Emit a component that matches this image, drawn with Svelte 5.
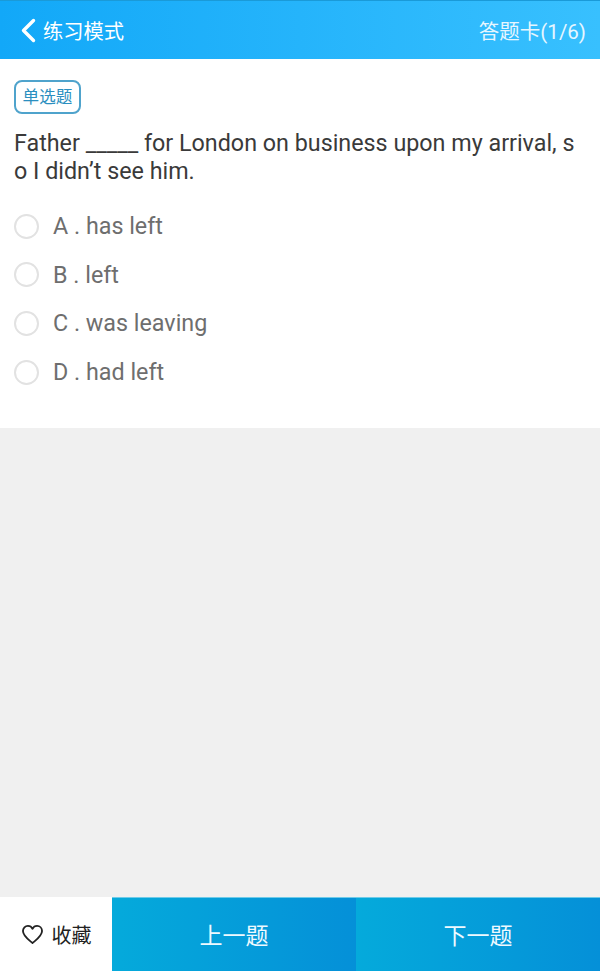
<script>
  const options = [
    { key: 'A', text: 'has left' },
    { key: 'B', text: 'left' },
    { key: 'C', text: 'was leaving' },
    { key: 'D', text: 'had left' }
  ];
</script>

<div class="page">
  <header class="topbar">
    <div class="back">
      <svg class="chevron" width="15" height="25" viewBox="0 0 15 25">
        <path d="M12.5 2.5 L2.5 12.5 L12.5 22.5" fill="none" stroke="#fff" stroke-width="3.4" stroke-linecap="round" stroke-linejoin="round" />
      </svg>
      <span>练习模式</span>
    </div>
    <div class="card-link">答题卡(1/6)</div>
  </header>

  <section class="question">
    <span class="tag">单选题</span>
    <p class="stem">Father _____ for London on business upon my arrival, so I didn’t see him.</p>
    <ul class="options">
      {#each options as opt}
        <li class="option">
          <span class="radio"></span>
          <span>{opt.key} . {opt.text}</span>
        </li>
      {/each}
    </ul>
  </section>

  <div class="spacer"></div>

  <footer class="bottombar">
    <div class="fav">
      <svg width="23" height="21" viewBox="0 0 24 22">
        <path d="M12 20 C8 16.6 2 12.6 2 7.4 C2 4.2 4.4 2 7.2 2 C9.2 2 11 3 12 5 C13 3 14.8 2 16.8 2 C19.6 2 22 4.2 22 7.4 C22 12.6 16 16.6 12 20 Z" fill="none" stroke="#222" stroke-width="1.9" stroke-linejoin="round" />
      </svg>
      <span>收藏</span>
    </div>
    <div class="nav-btn">上一题</div>
    <div class="nav-btn">下一题</div>
  </footer>
</div>

<style>
  :global(body) {
    margin: 0;
  }

  .page {
    display: flex;
    flex-direction: column;
    height: 971px;
    background: #f0f0f0;
    font-family: Roboto, "Noto Sans CJK SC", sans-serif;
  }

  .topbar {
    display: flex;
    justify-content: space-between;
    align-items: center;
    height: 58px;
    padding: 0 14px 2px 21px;
    margin-bottom: -2px;
    border-top: 1px solid #1a9ad8;
    background: linear-gradient(90deg, #12a8f8, #38c0fe);
    color: #fff;
    font-size: 20.3px;
  }

  .back {
    display: flex;
    align-items: center;
    gap: 7px;
  }

  .card-link {
    color: #e6f6ff;
    font-size: 20.5px;
  }

  .question {
    height: 369px;
    padding: 21px 14px 0;
    box-sizing: border-box;
    background: #fff;
  }

  .tag {
    display: block;
    box-sizing: border-box;
    width: 67px;
    height: 34px;
    border: 2px solid #4fa3cc;
    border-radius: 8px;
    color: #2b8fc0;
    font-size: 16.6px;
    line-height: 32px;
    text-align: center;
  }

  .stem {
    margin: 15px 0 0;
    padding-right: 8px;
    color: #3a3a3a;
    font-size: 23.3px;
    line-height: 28px;
    word-break: break-all;
  }

  .options {
    list-style: none;
    margin: 17px 0 0;
    padding: 0;
  }

  .option {
    display: flex;
    align-items: center;
    gap: 14px;
    height: 48.6px;
    color: #6e6e6e;
    font-size: 23.3px;
  }

  .radio {
    width: 25px;
    height: 25px;
    box-sizing: border-box;
    border: 2px solid #e2e2e2;
    border-radius: 50%;
  }

  .spacer {
    flex: 1;
  }

  .bottombar {
    display: flex;
    height: 74px;
  }

  .fav {
    display: flex;
    align-items: center;
    justify-content: center;
    gap: 8px;
    width: 112px;
    background: #fff;
    color: #222;
    font-size: 20px;
  }

  .nav-btn {
    display: flex;
    align-items: center;
    justify-content: center;
    flex: 1;
    border-top: 1px solid #6fcbe8;
    background: linear-gradient(90deg, #05aadb, #0590d8);
    color: #eef9ff;
    font-size: 23px;
    padding-bottom: 1px;
  }
</style>
